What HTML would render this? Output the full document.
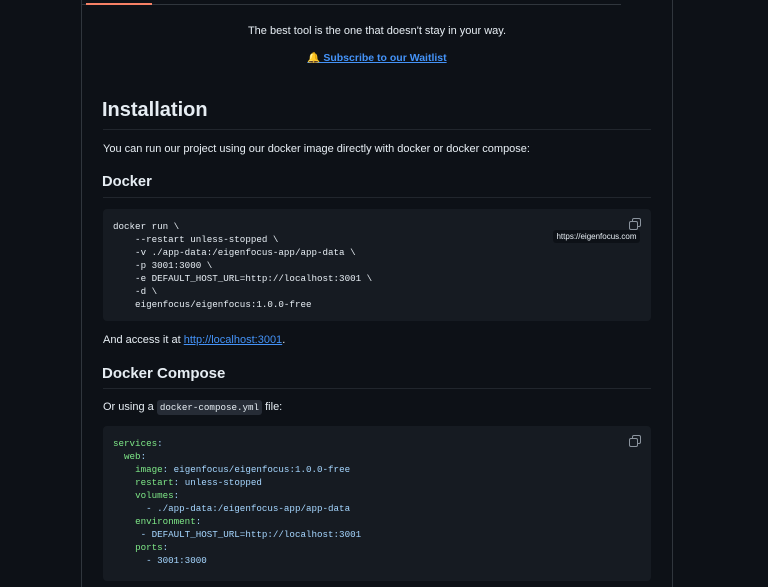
<!DOCTYPE html><html><head><style>
*{margin:0;padding:0;box-sizing:border-box}
body{width:768px;height:587px;overflow:hidden;background:#0d1117;position:relative;font-family:"Liberation Sans",sans-serif;color:#e6edf3}
.a{position:absolute;white-space:pre}
.mono{font-family:"Liberation Mono",monospace;font-size:9.2px;line-height:13px}
.hr{position:absolute;left:103px;width:548px;height:1px;background:#21262d}
.code{position:absolute;left:103px;width:548px;background:#161b22;border-radius:4px}
.g{color:#7ee787}.b{color:#a5d6ff}
.cp{position:absolute;width:9px;height:9px;border:1px solid #8b949e;border-radius:2px}
</style></head><body>
<div style="position:absolute;left:81px;top:0;width:1px;height:587px;background:#30363d"></div>
<div style="position:absolute;left:672px;top:0;width:1px;height:587px;background:#30363d"></div>
<div style="position:absolute;left:81px;top:4px;width:540px;height:1px;background:#30363d"></div>
<div style="position:absolute;left:86px;top:3px;width:66px;height:2px;background:#f78166"></div>
<div class="a" style="left:0;width:754px;text-align:center;top:25px;font-size:11px">The best tool is the one that doesn't stay in your way.</div>
<div class="a" style="left:0;width:754px;text-align:center;top:51px;font-size:10.5px;font-weight:bold;color:#4493f8;text-decoration:underline">🔔 Subscribe to our Waitlist</div>
<div class="a" style="left:102px;top:99px;font-size:20px;font-weight:bold">Installation</div>
<div class="hr" style="top:129px"></div>
<div class="a" style="left:103px;top:143px;font-size:11px">You can run our project using our docker image directly with docker or docker compose:</div>
<div class="a" style="left:102px;top:174px;font-size:14.7px;font-weight:bold">Docker</div>
<div class="hr" style="top:197px"></div>
<div class="code" style="top:209px;height:112px"></div>
<div class="a mono" style="left:113px;top:220px">docker run \
    --restart unless-stopped \
    -v ./app-data:/eigenfocus-app/app-data \
    -p 3001:3000 \
    -e DEFAULT_HOST_URL=http://localhost:3001 \
    -d \
    eigenfocus/eigenfocus:1.0.0-free</div>
<div class="cp" style="left:632px;top:218px"></div><div class="cp" style="left:629px;top:221px;background:#161b22"></div>
<div class="a" style="left:553px;top:230px;width:87px;height:13px;background:#0d1117;border-radius:3px;font-size:8px;line-height:13px;text-align:center;color:#e6edf3">https://eigenfocus.com</div>
<div class="a" style="left:103px;top:334px;font-size:11px">And access it at <span style="color:#4493f8;text-decoration:underline">http://localhost:3001</span>.</div>
<div class="a" style="left:102px;top:365px;font-size:15px;font-weight:bold">Docker Compose</div>
<div class="hr" style="top:388px"></div>
<div class="a" style="left:103px;top:401px;font-size:11px">Or using a <span style="font-family:'Liberation Mono',monospace;font-size:9.2px;background:#262c36;padding:2px 3px;border-radius:3px">docker-compose.yml</span> file:</div>
<div class="code" style="top:426px;height:155px"></div>
<div class="a mono b" style="left:113px;top:437px"><span class="g">services</span>:
  <span class="g">web</span>:
    <span class="g">image</span>: eigenfocus/eigenfocus:1.0.0-free
    <span class="g">restart</span>: unless-stopped
    <span class="g">volumes</span>:
      - ./app-data:/eigenfocus-app/app-data
    <span class="g">environment</span>:
     - DEFAULT_HOST_URL=http://localhost:3001
    <span class="g">ports</span>:
      - 3001:3000</div>
<div class="cp" style="left:632px;top:435px"></div><div class="cp" style="left:629px;top:438px;background:#161b22"></div>
</body></html>
